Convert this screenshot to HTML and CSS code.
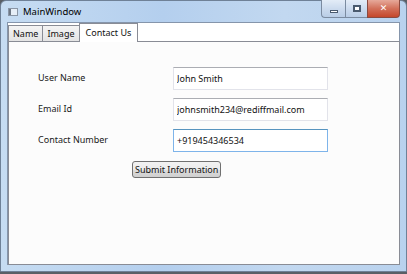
FILE: index.html
```html
<!doctype html>
<html lang="en">
<head>
<meta charset="utf-8">
<title>MainWindow</title>
<link rel="stylesheet" href="styles.css">
</head>
<body>

<div class="window">
  <div class="titlebar">
    <span class="app-icon"></span>
    <span class="title">MainWindow</span>
    <div class="caption-btns">
      <button class="cap min"><span class="glyph-min"></span></button>
      <button class="cap max"><span class="glyph-max"></span></button>
      <button class="cap close">&#x2715;</button>
    </div>
  </div>

  <div class="client">
    <ul class="tabs">
      <li class="tab">Name</li>
      <li class="tab">Image</li>
      <li class="tab active">Contact Us</li>
    </ul>

    <div class="tab-panel">
      <form class="contact">
        <label for="uname">User Name</label>
        <input id="uname" type="text" value="John Smith">

        <label for="email">Email Id</label>
        <input id="email" type="text" value="johnsmith234@rediffmail.com">

        <label for="phone">Contact Number</label>
        <input id="phone" type="text" class="focus" value="+919454346534">

        <button type="button" class="submit">Submit Information</button>
      </form>
    </div>
  </div>
</div>

</body>
</html>
```

FILE: styles.css
```css
*{box-sizing:border-box;margin:0;padding:0}
body{background:#5a5f66;font:9px/1.2 "Noto Sans",sans-serif;color:#1a1a1a;height:274px;overflow:hidden}

/* === window frame ============================== */
.window{
  width:407px;height:272px;display:flex;flex-direction:column;
  padding:0 6px 6px 6px;border:1px solid #6f8197;border-radius:6px 6px 0 0;
  background:linear-gradient(90deg,#c6dcf2,#b4cfee 40%,#c2d8f0 70%,#b9d2ee)
}
.titlebar{height:21px;display:flex;align-items:center;position:relative}
.app-icon{
  width:10px;height:8px;margin-left:1px;border:1px solid #8a96a6;
  background:linear-gradient(90deg,#6d7784 30%,#e6eef7 30%)
}
.title{margin-left:5px;font-size:9.5px;color:#000}
.caption-btns{position:absolute;right:0;top:-1px;display:flex}
.cap{
  height:18px;border:1px solid #7b8ba0;border-top:none;cursor:default;
  background:linear-gradient(#e3ecf7,#ccdbee 50%,#b9cde6);display:flex;
  align-items:center;justify-content:center
}
.cap.min{width:24px;border-radius:0 0 0 4px;border-right:none}
.cap.max{width:22px;border-right:none}
.cap.close{
  width:33px;border-radius:0 0 4px 0;color:#fff;font:700 9px/1 "DejaVu Sans",sans-serif;
  background:linear-gradient(#e6a99a,#d2705a 50%,#c5472b);border-color:#8a4a40
}
.glyph-min{width:8px;height:3px;background:#fff;border:1px solid #4a5a6e;margin-top:5px}
.glyph-max{width:8px;height:7px;border:1px solid #4a5a6e;background:#fff;box-shadow:inset 0 0 0 1px #4a5a6e}

/* === client area =============================== */
.client{
  flex:1;display:flex;flex-direction:column;background:#fff;
  border:1px solid #8595ab
}
.tabs{list-style:none;display:flex;align-items:flex-end;height:18px}
.tab{
  height:16px;padding:0 4px;border:1px solid #898c95;border-bottom:none;margin-right:-1px;
  background:linear-gradient(#f4f4f4,#e4e4e4);line-height:15px;color:#111
}
.tab.active{
  background:#fff;padding:0 6px;line-height:17px;position:relative;
  margin-bottom:-1px;height:19px;z-index:1
}
.tab-panel{flex:1;background:#fcfcfc;border:1px solid #898c95;margin:0 -1px -1px 0}

/* === form ====================================== */
.contact{
  display:grid;grid-template-columns:135px 155px;row-gap:8px;align-items:center;
  padding:25px 0 0 29px
}
.contact input{
  height:23px;border:1px solid #e2e3ea;border-top-color:#abadb3;
  padding:0 3px;font:9px "Noto Sans",sans-serif;background:#fff;color:#111
}
.contact input.focus{border-color:#7eb4ea;border-top-color:#5794bf}
.submit{
  grid-column:1 / 3;justify-self:start;margin:1px 0 0 94px;height:17px;
  padding:0 2px;border:1px solid #707070;border-radius:3px;white-space:nowrap;
  background:linear-gradient(#f2f2f2,#ebebeb 50%,#dddddd 51%,#cfcfcf);
  font:9px/1 "Noto Sans",sans-serif;color:#111
}
```
